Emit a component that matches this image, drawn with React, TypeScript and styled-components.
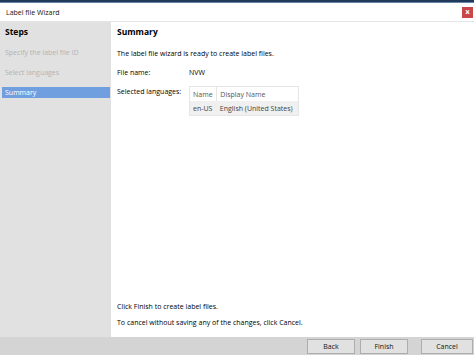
import React from "react";
import styled, { createGlobalStyle } from "styled-components";

const GlobalStyle = createGlobalStyle`
	html, body {
		margin: 0;
		padding: 0;
		background: #ffffff;
	}
	body {
		font-family: "Open Sans", "Noto Sans", sans-serif;
		color: #111;
	}
`;

const steps = ["Specify the label file ID", "Select languages", "Summary"];

const App = () => {
	return (
		<>
			<GlobalStyle />
			<Window>
				<TopStrip />
				<TitleBar>
					<Title>Label file Wizard</Title>
					<CloseButton>x</CloseButton>
				</TitleBar>
				<Body>
					<Sidebar>
						<Heading>Steps</Heading>
						<StepList>
							{steps.map((s, i) => (
								<Step key={s} active={i === steps.length - 1}>
									{s}
								</Step>
							))}
						</StepList>
					</Sidebar>
					<Main>
						<Heading>Summary</Heading>
						<Text>The label file wizard is ready to create label files.</Text>
						<Fields>
							<Label>File name:</Label>
							<Label>NVW</Label>
							<Label>Selected languages:</Label>
							<Table>
								<thead>
									<tr>
										<Th>Name</Th>
										<Th>Display Name</Th>
									</tr>
								</thead>
								<tbody>
									<tr>
										<Td>en-US</Td>
										<Td>English (United States)</Td>
									</tr>
								</tbody>
							</Table>
						</Fields>
						<Bottom>
							<Text>Click Finish to create label files.</Text>
							<Text>To cancel without saving any of the changes, click Cancel.</Text>
						</Bottom>
					</Main>
				</Body>
				<Footer>
					<Button>Back</Button>
					<Button>Finish</Button>
					<Button wide>Cancel</Button>
				</Footer>
			</Window>
		</>
	);
};

const Window = styled.div`
	width: 474px;
	height: 355px;
	display: flex;
	flex-direction: column;
	overflow: hidden;
`;

const TopStrip = styled.div`
	height: 3px;
	background: #1f3a5c;
	border-bottom: 1px solid #6a86a6;
	box-sizing: border-box;
`;

const TitleBar = styled.div`
	height: 18px;
	display: flex;
	align-items: center;
	justify-content: space-between;
	padding: 0 1px 0 6px;
	border-bottom: 1px solid #e6e6e6;
	background: #ffffff;
`;

const Title = styled.div`
	font-size: 7px;
	color: #111;
`;

const CloseButton = styled.div`
	width: 11px;
	height: 11px;
	background: #c9474b;
	color: #fff;
	font-family: "DejaVu Sans", sans-serif;
	font-size: 7px;
	font-weight: bold;
	line-height: 10px;
	text-align: center;
`;

const Body = styled.div`
	flex: 1;
	display: flex;
	min-height: 0;
`;

const Sidebar = styled.div`
	width: 111px;
	background: #e1e1e1;
	display: flex;
	flex-direction: column;
`;

const Heading = styled.div`
	height: 19px;
	line-height: 19px;
	padding-left: 5px;
	font-size: 8.5px;
	font-weight: 700;
	color: #000;
`;

const StepList = styled.div`
	display: flex;
	flex-direction: column;
	gap: 9px;
	padding: 6px 1px 0 2px;
`;

const Step = styled.div<{ active?: boolean }>`
	height: 11px;
	line-height: 11px;
	padding-left: 3px;
	font-size: 7px;
	color: ${(p) => (p.active ? "#ffffff" : "#b3b3b3")};
	background: ${(p) => (p.active ? "#6f9fdf" : "transparent")};
`;

const Main = styled.div`
	flex: 1;
	display: flex;
	flex-direction: column;
	padding-left: 1px;
	background: #ffffff;
`;

const Text = styled.div`
	padding-left: 5px;
	height: 12px;
	line-height: 12px;
	font-size: 7px;
	color: #000;
	margin-top: 7px;
`;

const Fields = styled.div`
	display: grid;
	grid-template-columns: 72px auto;
	justify-content: start;
	align-items: start;
	row-gap: 7px;
	padding-left: 5px;
	margin-top: 7px;
`;

const Label = styled.div`
	font-size: 7px;
	line-height: 12px;
	color: #000;
`;

const Table = styled.table`
	border-collapse: collapse;
	font-size: 7px;
	color: #555;
	width: 110px;
	border: 1px solid #e6e6e6;
`;

const Th = styled.th`
	font-weight: normal;
	text-align: left;
	height: 14px;
	padding: 0 3px;
	white-space: nowrap;
	border-right: 1px solid #e6e6e6;
	background: #ffffff;
	&:last-child {
		border-right: none;
	}
`;

const Td = styled.td`
	height: 14px;
	padding: 0 3px;
	white-space: nowrap;
	background: #f0f0f0;
	color: #444;
`;

const Bottom = styled.div`
	margin-top: auto;
	padding-bottom: 8px;
	display: flex;
	flex-direction: column;
	gap: 4px;
	& > div {
		margin-top: 0;
	}
`;

const Footer = styled.div`
	height: 18px;
	background: #d4d4d4;
	display: flex;
	justify-content: flex-end;
	align-items: flex-start;
	padding: 2px 1px 0 0;
	box-sizing: border-box;
	gap: 5px;
`;

const Button = styled.div<{ wide?: boolean }>`
	width: ${(p) => (p.wide ? 52 : 48)}px;
	height: 15px;
	box-sizing: border-box;
	border: 1px solid #adadad;
	background: #e1e1e1;
	font-size: 7px;
	line-height: 13px;
	text-align: center;
	color: #111;
	margin-left: ${(p) => (p.wide ? 8 : 0)}px;
`;

export default App;
